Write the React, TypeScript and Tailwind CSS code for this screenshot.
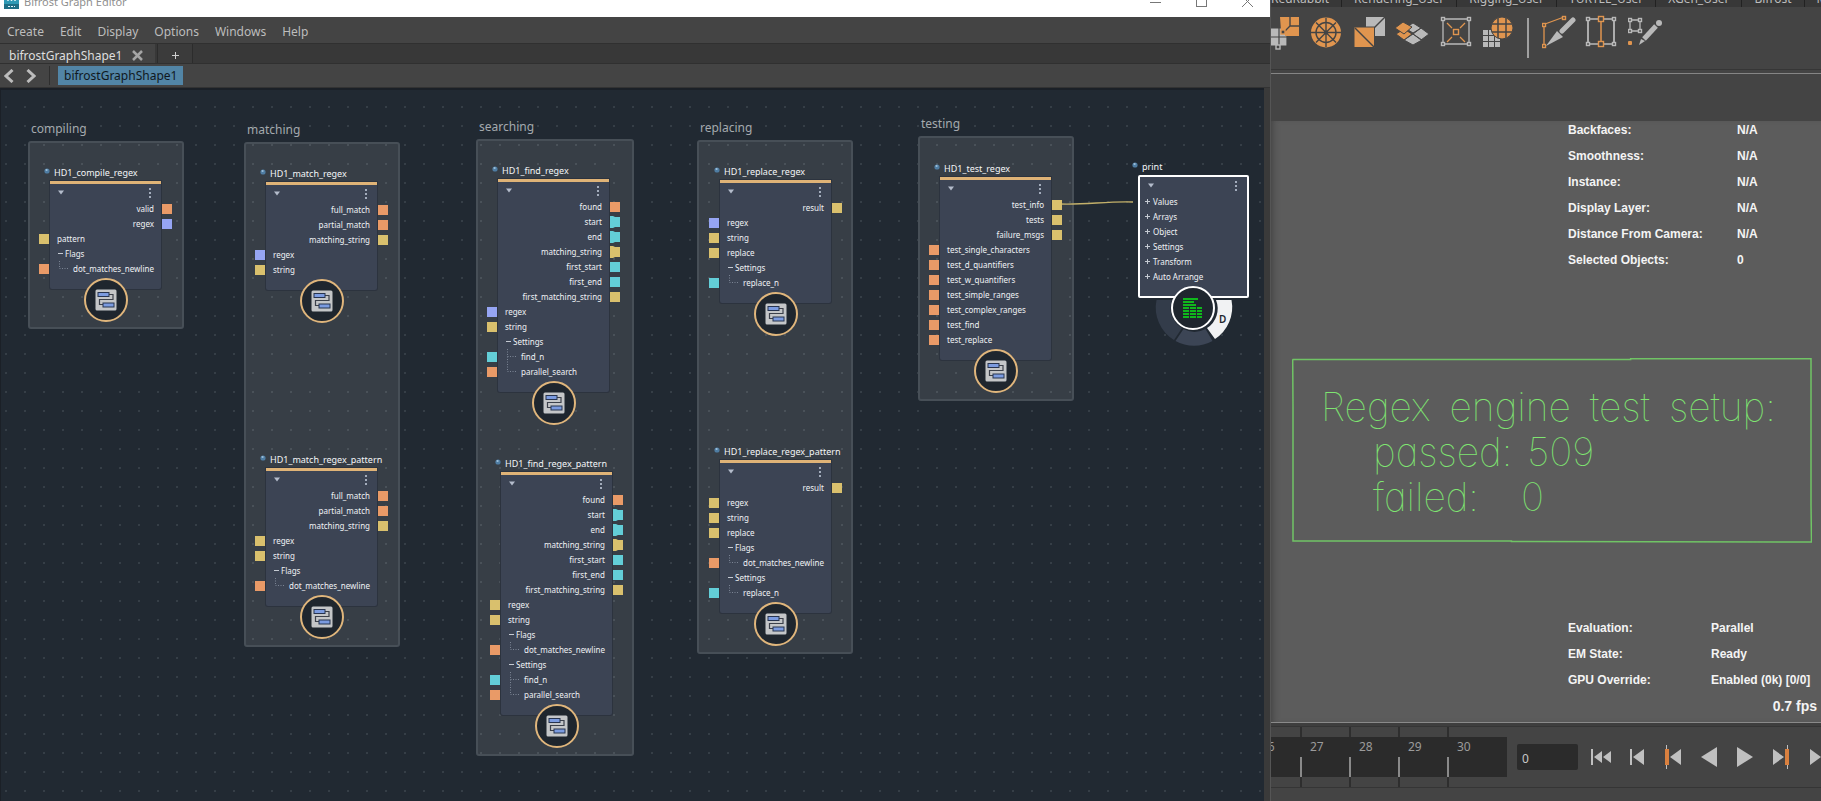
import type { ReactNode } from 'react';
import clsx from 'clsx';

type PortColor = 'bool' | 'object' | 'string' | 'int';
type RowKind = 'out' | 'in' | 'sub' | 'section';

interface Row {
    kind: RowKind;
    label: string;
    color?: PortColor;
    array?: boolean;
    last?: boolean;
}

interface NodeData {
    name: string;
    x: number;
    y: number;
    rows: Row[];
}

interface GroupData {
    label: string;
    x: number;
    y: number;
    width: number;
    height: number;
}

const PORT_FILL: Record<PortColor, string> = {
    bool: 'fill-[#e99a67]',
    object: 'fill-[#96a5f3]',
    string: 'fill-[#d9c06d]',
    int: 'fill-[#63ced7]',
};

const out = (label: string, color: PortColor, array = false): Row => ({ kind: 'out', label, color, array });
const input = (label: string, color: PortColor): Row => ({ kind: 'in', label, color });
const sub = (label: string, color: PortColor, last = true): Row => ({ kind: 'sub', label, color, last });
const section = (label: string): Row => ({ kind: 'section', label });

const MATCH_OUTPUTS = [out('full_match', 'bool'), out('partial_match', 'bool'), out('matching_string', 'string')];

const FIND_OUTPUTS = [
    out('found', 'bool'),
    out('start', 'int', true),
    out('end', 'int', true),
    out('matching_string', 'string', true),
    out('first_start', 'int'),
    out('first_end', 'int'),
    out('first_matching_string', 'string'),
];

const GROUPS: GroupData[] = [
    { label: 'compiling', x: 28, y: 141, width: 156, height: 188 },
    { label: 'matching', x: 244, y: 142, width: 156, height: 505 },
    { label: 'searching', x: 476, y: 139, width: 158, height: 617 },
    { label: 'replacing', x: 697, y: 140, width: 156, height: 514 },
    { label: 'testing', x: 918, y: 136, width: 156, height: 265 },
];

const NODES: NodeData[] = [
    {
        name: 'HD1_compile_regex',
        x: 50,
        y: 181,
        rows: [
            out('valid', 'bool'),
            out('regex', 'object'),
            input('pattern', 'string'),
            section('Flags'),
            sub('dot_matches_newline', 'bool'),
        ],
    },
    {
        name: 'HD1_match_regex',
        x: 266,
        y: 182,
        rows: [...MATCH_OUTPUTS, input('regex', 'object'), input('string', 'string')],
    },
    {
        name: 'HD1_match_regex_pattern',
        x: 266,
        y: 468,
        rows: [
            ...MATCH_OUTPUTS,
            input('regex', 'string'),
            input('string', 'string'),
            section('Flags'),
            sub('dot_matches_newline', 'bool'),
        ],
    },
    {
        name: 'HD1_find_regex',
        x: 498,
        y: 179,
        rows: [
            ...FIND_OUTPUTS,
            input('regex', 'object'),
            input('string', 'string'),
            section('Settings'),
            sub('find_n', 'int', false),
            sub('parallel_search', 'bool'),
        ],
    },
    {
        name: 'HD1_find_regex_pattern',
        x: 501,
        y: 472,
        rows: [
            ...FIND_OUTPUTS,
            input('regex', 'string'),
            input('string', 'string'),
            section('Flags'),
            sub('dot_matches_newline', 'bool'),
            section('Settings'),
            sub('find_n', 'int', false),
            sub('parallel_search', 'bool'),
        ],
    },
    {
        name: 'HD1_replace_regex',
        x: 720,
        y: 180,
        rows: [
            out('result', 'string'),
            input('regex', 'object'),
            input('string', 'string'),
            input('replace', 'string'),
            section('Settings'),
            sub('replace_n', 'int'),
        ],
    },
    {
        name: 'HD1_replace_regex_pattern',
        x: 720,
        y: 460,
        rows: [
            out('result', 'string'),
            input('regex', 'string'),
            input('string', 'string'),
            input('replace', 'string'),
            section('Flags'),
            sub('dot_matches_newline', 'bool'),
            section('Settings'),
            sub('replace_n', 'int'),
        ],
    },
    {
        name: 'HD1_test_regex',
        x: 940,
        y: 177,
        rows: [
            out('test_info', 'string'),
            out('tests', 'string'),
            out('failure_msgs', 'string'),
            input('test_single_characters', 'bool'),
            input('test_d_quantifiers', 'bool'),
            input('test_w_quantifiers', 'bool'),
            input('test_simple_ranges', 'bool'),
            input('test_complex_ranges', 'bool'),
            input('test_find', 'bool'),
            input('test_replace', 'bool'),
        ],
    },
];

const PRINT_SECTIONS = ['Values', 'Arrays', 'Object', 'Settings', 'Transform', 'Auto Arrange'];
const MENUS = ['Create', 'Edit', 'Display', 'Options', 'Windows', 'Help'];
const SHELF_TABS = ['RedRabbit', 'Rendering_User', 'Rigging_User', 'TURTLE_User', 'XGen_User', 'Bifrost', 'MASH'];

const OBJECT_DETAILS = [
    ['Backfaces:', 'N/A'],
    ['Smoothness:', 'N/A'],
    ['Instance:', 'N/A'],
    ['Display Layer:', 'N/A'],
    ['Distance From Camera:', 'N/A'],
    ['Selected Objects:', '0'],
];

const EVALUATION = [
    ['Evaluation:', 'Parallel'],
    ['EM State:', 'Ready'],
    ['GPU Override:', 'Enabled (0k) [0/0]'],
];

/* ---------- Graph editor ---------- */

function Port({ color, array }: { color: PortColor; array?: boolean }) {
    return (
        <svg width="10" height="12" viewBox="0 0 10 12" className={clsx('shrink-0', PORT_FILL[color])}>
            {array ? <path d="M0 0h3l2 1h5v10H5l-2 1H0z" /> : <rect y="1" width="10" height="10" />}
        </svg>
    );
}

function NodeRow({ row }: { row: Row }) {
    if (row.kind === 'out') {
        return (
            <li className="-mr-[11px] flex h-[15px] items-center justify-end gap-2">
                <span>{row.label}</span>
                <Port color={row.color!} array={row.array} />
            </li>
        );
    }
    if (row.kind === 'section') {
        return (
            <li className="flex h-[15px] items-center gap-[2px] pl-2">
                <span className="h-px w-[5px] bg-[#c5cad2]" />
                <span>{row.label}</span>
            </li>
        );
    }
    return (
        <li className="-ml-[11px] flex h-[15px] items-center gap-2">
            <Port color={row.color!} />
            {row.kind === 'sub' && (
                <svg width="10" height="15" viewBox="0 0 10 15" className="-mr-1 ml-[2px] shrink-0" stroke="#7b8494" strokeDasharray="1 1.5">
                    <path d={row.last ? 'M.5 0v7.5' : 'M.5 0v15'} />
                    <path d="M.5 7.5H9" />
                </svg>
            )}
            <span>{row.label}</span>
        </li>
    );
}

function NodeTitle({ name }: { name: string }) {
    return (
        <h3 className="-ml-[6px] flex h-4 items-center gap-1 text-[9px] leading-4 whitespace-nowrap text-[#f3f5f7]">
            <svg width="6" height="6" viewBox="0 0 6 6" className="mb-[5px] shrink-0">
                <circle cx="3" cy="3" r="2.6" fill="#4f7da3" />
                <circle cx="2.6" cy="2" r="1.1" fill="#9cc0dc" />
            </svg>
            {name}
        </h3>
    );
}

function NodeHeader() {
    return (
        <div className="flex h-[17px] items-center justify-between pr-[9px] pl-2">
            <button aria-label="Collapse node">
                <svg width="6" height="5" viewBox="0 0 6 5">
                    <path d="M0 .5h6L3 4.5z" fill="#b4bccb" />
                </svg>
            </button>
            <button aria-label="Node options">
                <svg width="3" height="10" viewBox="0 0 3 10" fill="#a3acbc">
                    <rect width="2" height="2" />
                    <rect y="4" width="2" height="2" />
                    <rect y="8" width="2" height="2" />
                </svg>
            </button>
        </div>
    );
}

function CompoundBadge() {
    return (
        <div className="-mt-[11px] flex size-11 items-center justify-center self-center rounded-full border-2 border-[#e0b67c] bg-[#1f262e]">
            <svg width="22" height="22" viewBox="0 0 22 22">
                <rect x=".5" y=".5" width="21" height="21" rx="1.5" fill="#c4c6c8" />
                <path d="M14 5.5h4v5H4.500v5H8" fill="none" stroke="#3c414b" strokeWidth="1.2" />
                <rect x="3" y="3.500" width="11" height="4" fill="#7b9be0" stroke="#27344f" />
                <rect x="8" y="14" width="11" height="4" fill="#7b9be0" stroke="#27344f" />
            </svg>
        </div>
    );
}

function GraphNode({ node }: { node: NodeData }) {
    return (
        <article className="absolute flex w-[111px] flex-col" style={{ left: node.x, top: node.y - 16 }}>
            <NodeTitle name={node.name} />
            <div className="rounded-b-[2px] border-t-[3px] border-[#dfb377] bg-[#3c4454] pb-[13px] shadow-[0_0_0_1px_#2c333e]">
                <NodeHeader />
                <ul className="text-[8px] leading-[15px] whitespace-nowrap text-[#f0f2f5]">
                    {node.rows.map((row) => (
                        <NodeRow key={`${row.kind}-${row.label}`} row={row} />
                    ))}
                </ul>
            </div>
            <CompoundBadge />
        </article>
    );
}

function PrintNode() {
    return (
        <article className="absolute top-[159px] left-[1138px] flex w-[111px] flex-col">
            <NodeTitle name="print" />
            <div className="rounded-[2px] border-2 border-white bg-[#3c4454] pb-3">
                <NodeHeader />
                <ul className="text-[8px] leading-[15px] whitespace-nowrap text-[#f0f2f5]">
                    {PRINT_SECTIONS.map((label) => (
                        <li key={label} className="flex h-[15px] items-center gap-[3px] pl-[5px]">
                            <svg width="5" height="5" viewBox="0 0 5 5" stroke="#c5cad2">
                                <path d="M0 2.500h5M2.500 0v5" />
                            </svg>
                            {label}
                        </li>
                    ))}
                </ul>
            </div>
            {/* Display flag ring, its centre circle overlaps the node body */}
            <svg width="78" height="50" viewBox="0 0 78 50" className="relative self-center overflow-visible">
                <path d="M1.500 2A38 38 0 0 0 19 42l8-12A23 23 0 0 1 17 2z" fill="#333c4a" />
                <path d="M20.500 43a38 38 0 0 0 37 0l-7-12a23 23 0 0 1-22 0z" fill="#3c4555" />
                <path d="M76.500 2A38 38 0 0 1 60 41L52 30A23 23 0 0 0 61 2z" fill="#f1f2f3" />
                <text x="64" y="25" fontSize="10" fontWeight="600" fill="#22272e">D</text>
                <circle cx="38" cy="10" r="21" fill="#1f262e" stroke="#fff" strokeWidth="2" />
                <g transform="translate(27 0)" fill="#10b81c">
                    <rect x="1" y="0" width="15" height="2" />
                    <rect x="1" y="3" width="11" height="2" />
                    <rect x="1" y="6" width="13" height="2" />
                    {[9, 12, 15, 18].map((y) => (
                        <g key={y}>
                            <rect x="1" y={y} width="6" height="2" />
                            <rect x="8" y={y} width="6" height="2" />
                            <rect x="15" y={y} width="5" height="2" />
                        </g>
                    ))}
                </g>
            </svg>
        </article>
    );
}

function GraphCanvas() {
    return (
        <main className="relative min-h-0 flex-1 overflow-hidden border-t-2 border-l border-[#1b2027] bg-[#212932] bg-[radial-gradient(circle_at_5px_17px,#3d464f_0.6px,transparent_1px)] bg-size-[19px_19px]">
            {/* Node coordinates are measured from the top of the window */}
            <div className="absolute -top-[90px] -left-px">
                {GROUPS.map((group) => (
                    <section key={group.label} className="absolute" style={{ left: group.x, top: group.y - 22 }}>
                        <h2 className="h-[22px] pl-[3px] text-xs leading-5 text-[#a4a9ae]">{group.label}</h2>
                        <div
                            className="rounded-[3px] border-2 border-[#474f57] bg-[#ffffff1a]"
                            style={{ width: group.width, height: group.height }}
                        />
                    </section>
                ))}
                <svg width="76" height="8" viewBox="0 0 76 8" className="absolute top-[199px] left-[1060px]" fill="none">
                    <path d="M0 5C25 6 48 2 73 3" stroke="#c3b06a" strokeWidth="1.3" />
                </svg>
                {NODES.map((node) => (
                    <GraphNode key={node.name} node={node} />
                ))}
                <PrintNode />
            </div>
        </main>
    );
}

function TitleBar() {
    return (
        <header className="flex h-[17px] shrink-0 flex-col justify-end overflow-hidden bg-white">
            <div className="flex h-8 shrink-0 items-center pl-1">
                <svg width="15" height="16" viewBox="0 0 15 16">
                    <rect width="15" height="16" rx="1" fill="#2f9ab5" />
                    <path d="M4 8V3h7v5M7.500 3v5" stroke="#e8f6fa" strokeWidth="1.500" fill="none" />
                    <rect y="11" width="15" height="5" fill="#1f6f86" />
                    <path d="M4 13.500h7" stroke="#e8f6fa" strokeDasharray="2 1" />
                </svg>
                <h1 className="ml-[5px] flex-1 pt-[2px] text-[11px] leading-4 text-[#8f8f8f]">Bifrost Graph Editor</h1>
                <div className="flex">
                    <button aria-label="Minimize" className="flex w-[46px] justify-center">
                        <svg width="11" height="11" viewBox="0 0 11 11" stroke="#777"><path d="M0 6.500h11" /></svg>
                    </button>
                    <button aria-label="Maximize" className="flex w-[46px] justify-center">
                        <svg width="11" height="11" viewBox="0 0 11 11" stroke="#777" fill="none"><rect x=".5" y=".5" width="10" height="10" /></svg>
                    </button>
                    <button aria-label="Close" className="flex w-[46px] justify-center">
                        <svg width="11" height="11" viewBox="0 0 11 11" stroke="#777"><path d="M0 0l11 11M11 0L0 11" /></svg>
                    </button>
                </div>
            </div>
        </header>
    );
}

function GraphEditor() {
    return (
        <section className="flex min-w-0 flex-col border-r border-[#555] bg-[#444]">
            <TitleBar />
            <nav className="flex h-[26px] shrink-0 items-center gap-4 pt-[3px] pl-[7px] text-xs text-[#bdbdbd]">
                {MENUS.map((menu) => (
                    <button key={menu}>{menu}</button>
                ))}
            </nav>
            <div className="flex h-[21px] shrink-0 items-stretch gap-[2px] border-y border-[#303030] bg-[#383838] text-xs">
                <div className="flex w-[155px] items-center justify-between bg-[#444] pt-1 pr-3 pl-[9px] text-[#dedede]">
                    <button>bifrostGraphShape1</button>
                    <button aria-label="Close tab">
                        <svg width="11" height="11" viewBox="0 0 11 11" stroke="#a5a5a5" strokeWidth="2.500"><path d="M1 1l9 9M10 1l-9 9" /></svg>
                    </button>
                </div>
                <button aria-label="New tab" className="flex w-9 items-center justify-center border-x border-[#2c2c2c] bg-[#3b3b3b] pt-[3px] text-[#cfcfcf]">
                    <svg width="7" height="7" viewBox="0 0 7 7" stroke="currentColor"><path d="M0 3.500h7M3.500 0v7" /></svg>
                </button>
            </div>
            <div className="flex h-[23px] shrink-0 items-center text-xs">
                <button aria-label="Back" className="ml-1">
                    <svg width="10" height="14" viewBox="0 0 10 14" fill="none" stroke="#bcbcbc" strokeWidth="3"><path d="M8.500 1L2 7l6.500 6" /></svg>
                </button>
                <button aria-label="Forward" className="ml-3">
                    <svg width="10" height="14" viewBox="0 0 10 14" fill="none" stroke="#bcbcbc" strokeWidth="3"><path d="M1.500 1L8 7l-6.500 6" /></svg>
                </button>
                <span className="ml-[13px] h-[19px] w-px bg-[#2e2e2e]" />
                <button className="ml-2 h-[19px] bg-[#5285a6] px-[6px] leading-[19px] text-[#10181e]">bifrostGraphShape1</button>
            </div>
            <div className="flex min-h-0 flex-1 border-t border-[#333] bg-[#3a3a3a] pr-[6px]">
                <GraphCanvas />
            </div>
        </section>
    );
}

/* ---------- Main window ---------- */

const ORANGE = '#e0954f';
const GREY = '#b9b9b9';
const DARK = '#444';

function SmallBox({ x, y, color, size = 4 }: { x: number; y: number; color: string; size?: number }) {
    return <rect x={x - size / 2} y={y - size / 2} width={size} height={size} fill={DARK} stroke={color} strokeWidth="1.400" />;
}

function ShelfButton({ label, children }: { label: string; children: ReactNode }) {
    return (
        <button aria-label={label} className="flex w-[43px] shrink-0 justify-center">
            <svg width="34" height="36" viewBox="0 0 34 36" fill="none">{children}</svg>
        </button>
    );
}

function Shelf() {
    return (
        <div className="-ml-[10px] flex h-[62px] shrink-0 items-start pt-2">
            <ShelfButton label="Extract">
                <g fill={GREY} stroke={DARK} strokeWidth="1.200">
                    <path d="M4 13h9v9H4zM13 13h8v9h-8zM4 22h9v9H4zM13 22h8v9h-8z" />
                </g>
                <path d="M14 2h19v19H19v-5h-4z" fill={ORANGE} />
                <path d="M24 2v9l-5 5M24 11h9" stroke={DARK} strokeWidth="1.400" />
                <SmallBox x={17} y={17} color={ORANGE} />
                <SmallBox x={12} y={32} color={GREY} />
            </ShelfButton>
            <ShelfButton label="Fill hole">
                <circle cx="17" cy="17.500" r="15" fill={ORANGE} />
                <g stroke={DARK} strokeWidth="1.400">
                    <circle cx="17" cy="17.500" r="10" />
                    <path d="M17 3v29M2 17.500h30M7 7.500l20 20M27 7.500l-20 20" />
                </g>
                <circle cx="17" cy="17.500" r="2" fill={DARK} />
            </ShelfButton>
            <ShelfButton label="Mirror">
                <path d="M14 2h19v19H14z" fill={GREY} />
                <path d="M33 2L14 21" stroke={DARK} strokeWidth="1.400" />
                <path d="M2 12h20.500v20.500H2z" fill={ORANGE} stroke={DARK} />
                <path d="M3 13l19 19" stroke={DARK} strokeWidth="1.400" />
            </ShelfButton>
            <ShelfButton label="Duplicate faces">
                <g fill={GREY} stroke={DARK}>
                    <path d="M18 8l8 5-8 5-8-5zM26 13l8 6-8 6-8-6zM18 19l9 6-9 5-9-5z" />
                </g>
                <path d="M1 19l8-5 8 5-8 6z" fill={ORANGE} stroke={DARK} />
                <path d="M0 13l8-6 9 5-8 7z" fill={ORANGE} stroke={DARK} />
            </ShelfButton>
            <ShelfButton label="Lattice">
                <path d="M5 4h26v25H5z" stroke={GREY} strokeWidth="1.300" />
                <path d="M9 8l5 5M27 8l-5 5M9 27l5-5M27 27l-5-5" stroke={ORANGE} strokeWidth="1.300" />
                <SmallBox x={5} y={4} color={GREY} size={3} />
                <SmallBox x={31} y={4} color={GREY} size={3} />
                <SmallBox x={5} y={29} color={GREY} size={3} />
                <SmallBox x={31} y={29} color={GREY} size={3} />
                <SmallBox x={18} y={17} color={ORANGE} size={5} />
            </ShelfButton>
            <ShelfButton label="Smooth">
                <g fill={GREY}>
                    {[0, 1, 2].map((r) => [0, 1, 2].map((c) => <rect key={`${r}${c}`} x={2 + c * 6} y={15 + r * 6} width="5" height="5" />))}
                </g>
                <circle cx="21" cy="13" r="11" fill={ORANGE} stroke={DARK} />
                <path d="M11 9h20M11 17h20M17 3v20M25 3v20" stroke={DARK} strokeWidth="1.500" />
            </ShelfButton>
            <span className="mx-2 mt-[3px] h-10 w-[2px] shrink-0 bg-[#a0a0a0]" />
            <ShelfButton label="Multi-cut">
                <path d="M2 11v20M3 9l19-7" stroke={ORANGE} strokeWidth="1.300" />
                <SmallBox x={2} y={10} color={ORANGE} size={3} />
                <SmallBox x={22} y={3} color={ORANGE} size={3} />
                <SmallBox x={2} y={31} color={ORANGE} size={3} />
                <path d="M4 31l11-15 6 6z" fill={GREY} />
                <path d="M20 16L31 5" stroke={GREY} strokeWidth="5" strokeLinecap="round" />
            </ShelfButton>
            <ShelfButton label="Insert edge loop">
                <path d="M3 4h26M3 29h26" stroke={GREY} strokeWidth="1.300" />
                <path d="M3 4v25M29 4v25" stroke={GREY} strokeWidth="1.800" />
                <path d="M16 5v24" stroke={ORANGE} strokeWidth="1.500" />
                <SmallBox x={3} y={4} color={GREY} size={3} />
                <SmallBox x={29} y={4} color={GREY} size={3} />
                <SmallBox x={3} y={29} color={GREY} size={3} />
                <SmallBox x={29} y={29} color={GREY} size={3} />
                <SmallBox x={16} y={4} color={ORANGE} size={5} />
                <SmallBox x={16} y={29} color={ORANGE} size={5} />
            </ShelfButton>
            <ShelfButton label="Quad draw">
                <path d="M2 5h10v11H2z" stroke={GREY} strokeWidth="1.300" />
                <SmallBox x={2} y={5} color={GREY} size={3} />
                <SmallBox x={12} y={5} color={GREY} size={3} />
                <SmallBox x={2} y={16} color={GREY} size={3} />
                <SmallBox x={12} y={16} color={GREY} size={3} />
                <rect y="26" width="4" height="4" rx="1" fill={ORANGE} />
                <path d="M16 24L28 11" stroke={GREY} strokeWidth="5" />
                <circle cx="31" cy="8" r="3" fill={GREY} />
                <path d="M13 24l4 2-6 4z" fill={GREY} />
            </ShelfButton>
        </div>
    );
}

function Hud({ items, columns }: { items: string[][]; columns: string }) {
    return (
        <dl className={clsx('ml-auto grid w-[253px] gap-y-[10px] text-xs leading-4', columns)}>
            {items.map(([label, value]) => (
                <div key={label} className="contents">
                    <dt>{label}</dt>
                    <dd>{value}</dd>
                </div>
            ))}
        </dl>
    );
}

function ResultText() {
    return (
        <div className="relative mt-[90px] mr-[9px] ml-[21px] pt-[26px] pb-6 pl-[29px] font-[Inter,sans-serif] text-[39px] leading-[45px] font-thin whitespace-nowrap text-[#7fe571] [font-feature-settings:'cv11']">
            <svg viewBox="0 0 519 184" preserveAspectRatio="none" className="absolute inset-0 size-full" fill="none" stroke="#70c465" strokeWidth="1.500">
                <path d="M1 1.500H338V.8H518V146l.500 37H490L219 182.500V182H1V49L.700 2z" />
            </svg>
            <p className="flex gap-[19px]">
                <span>Regex</span>
                <span>engine</span>
                <span>test</span>
                <span>setup:</span>
            </p>
            <p className="flex gap-[15px] pl-[52px]">
                <span>passed:</span>
                <span>509</span>
            </p>
            <p className="flex gap-[42px] pl-[52px]">
                <span>failed:</span>
                <span>0</span>
            </p>
        </div>
    );
}

function Viewport() {
    return (
        <main className="flex min-h-0 flex-1 flex-col overflow-hidden border-b border-[#8a8a8a] bg-[#5c5c5c] pt-px font-['Liberation_Sans',sans-serif] font-bold text-[#f4f4f4] shadow-[inset_6px_0_6px_-4px_#444]">
            <Hud items={OBJECT_DETAILS} columns="grid-cols-[169px_auto]" />
            <ResultText />
            <div className="mt-auto pb-2">
                <Hud items={EVALUATION} columns="grid-cols-[143px_auto]" />
                <p className="mt-[10px] pr-1 text-right text-sm leading-4">0.7 fps</p>
            </div>
        </main>
    );
}

function PlayButton({ label, children }: { label: string; children: ReactNode }) {
    return (
        <button aria-label={label} className="flex w-9 shrink-0 justify-center">
            <svg width="22" height="24" viewBox="0 0 22 24" fill="#c0c0c0">{children}</svg>
        </button>
    );
}

function TimeSlider() {
    return (
        <footer className="shrink-0 border-t-[3px] border-[#3e3e3e] bg-[#444]">
            <div className="flex h-[62px] items-center overflow-hidden border-y border-[#353535]">
                <div className="w-[236px] shrink-0 overflow-hidden">
                    <ol className="-ml-5 flex text-xs text-[#9b9b9b]">
                        {[26, 27, 28, 29, 30].map((frame) => (
                            <li key={frame} className="w-[49px] shrink-0 last:w-[60px]">
                                <div className="h-[10px] w-[2px] bg-[#2e2e2e]" />
                                <div className="flex h-10 flex-col justify-between bg-[#2b2b2b]">
                                    <span className="pt-[2px] pl-[10px] leading-4">{frame}</span>
                                    <span className="h-5 w-[2px] bg-[#8a8a8a]" />
                                </div>
                                <div className="h-[10px] w-[2px] bg-[#2e2e2e]" />
                            </li>
                        ))}
                    </ol>
                </div>
                <input
                    aria-label="Current frame"
                    defaultValue="0"
                    className="mr-[5px] ml-[10px] h-[26px] w-[61px] shrink-0 rounded-[2px] bg-[#2b2b2b] px-[5px] pt-[3px] text-xs text-[#c8c8c8]"
                />
                <PlayButton label="Go to start">
                    <path d="M1 4h2v16H1zM12 6v12l-8-6zM21 6v12l-8-6z" />
                </PlayButton>
                <PlayButton label="Step back one frame">
                    <path d="M4 4h2v16H4zM18 4v16L7 12z" />
                </PlayButton>
                <PlayButton label="Step back one key">
                    <path d="M4 0h1v24H4z" />
                    <path d="M3 4h4v16H3z" fill="#d9803f" />
                    <path d="M19 4v16L8 12z" />
                </PlayButton>
                <PlayButton label="Play backwards">
                    <path d="M19 2v20L3 12z" />
                </PlayButton>
                <PlayButton label="Play forwards">
                    <path d="M3 2v20l16-10z" />
                </PlayButton>
                <PlayButton label="Step forward one key">
                    <path d="M17 0h1v24h-1z" />
                    <path d="M15 4h4v16h-4z" fill="#d9803f" />
                    <path d="M3 4v16l11-8z" />
                </PlayButton>
                <PlayButton label="Step forward one frame">
                    <path d="M4 4v16l11-8zM16 4h2v16h-2z" />
                </PlayButton>
            </div>
            <div className="h-[13px]" />
        </footer>
    );
}

function MainWindow() {
    return (
        <section className="flex min-w-0 flex-col overflow-hidden bg-[#444]">
            <nav className="flex h-[7px] shrink-0 items-end overflow-hidden bg-[#333] text-xs leading-4 text-[#bdbdbd]">
                {SHELF_TABS.map((tab) => (
                    <button key={tab} className="h-4 shrink-0 border-r border-[#222] bg-[#383838] px-3 first:pl-0">
                        {tab}
                    </button>
                ))}
            </nav>
            <Shelf />
            <div className="h-[5px] shrink-0 border-t border-b border-t-[#363636] border-b-[#858585]" />
            <div className="h-[47px] shrink-0" />
            <Viewport />
            <TimeSlider />
        </section>
    );
}

export default function App() {
    return (
        <div className="grid h-screen grid-cols-[1271fr_550fr] overflow-hidden bg-[#444] font-['Noto_Sans',sans-serif]">
            <GraphEditor />
            <MainWindow />
        </div>
    );
}
